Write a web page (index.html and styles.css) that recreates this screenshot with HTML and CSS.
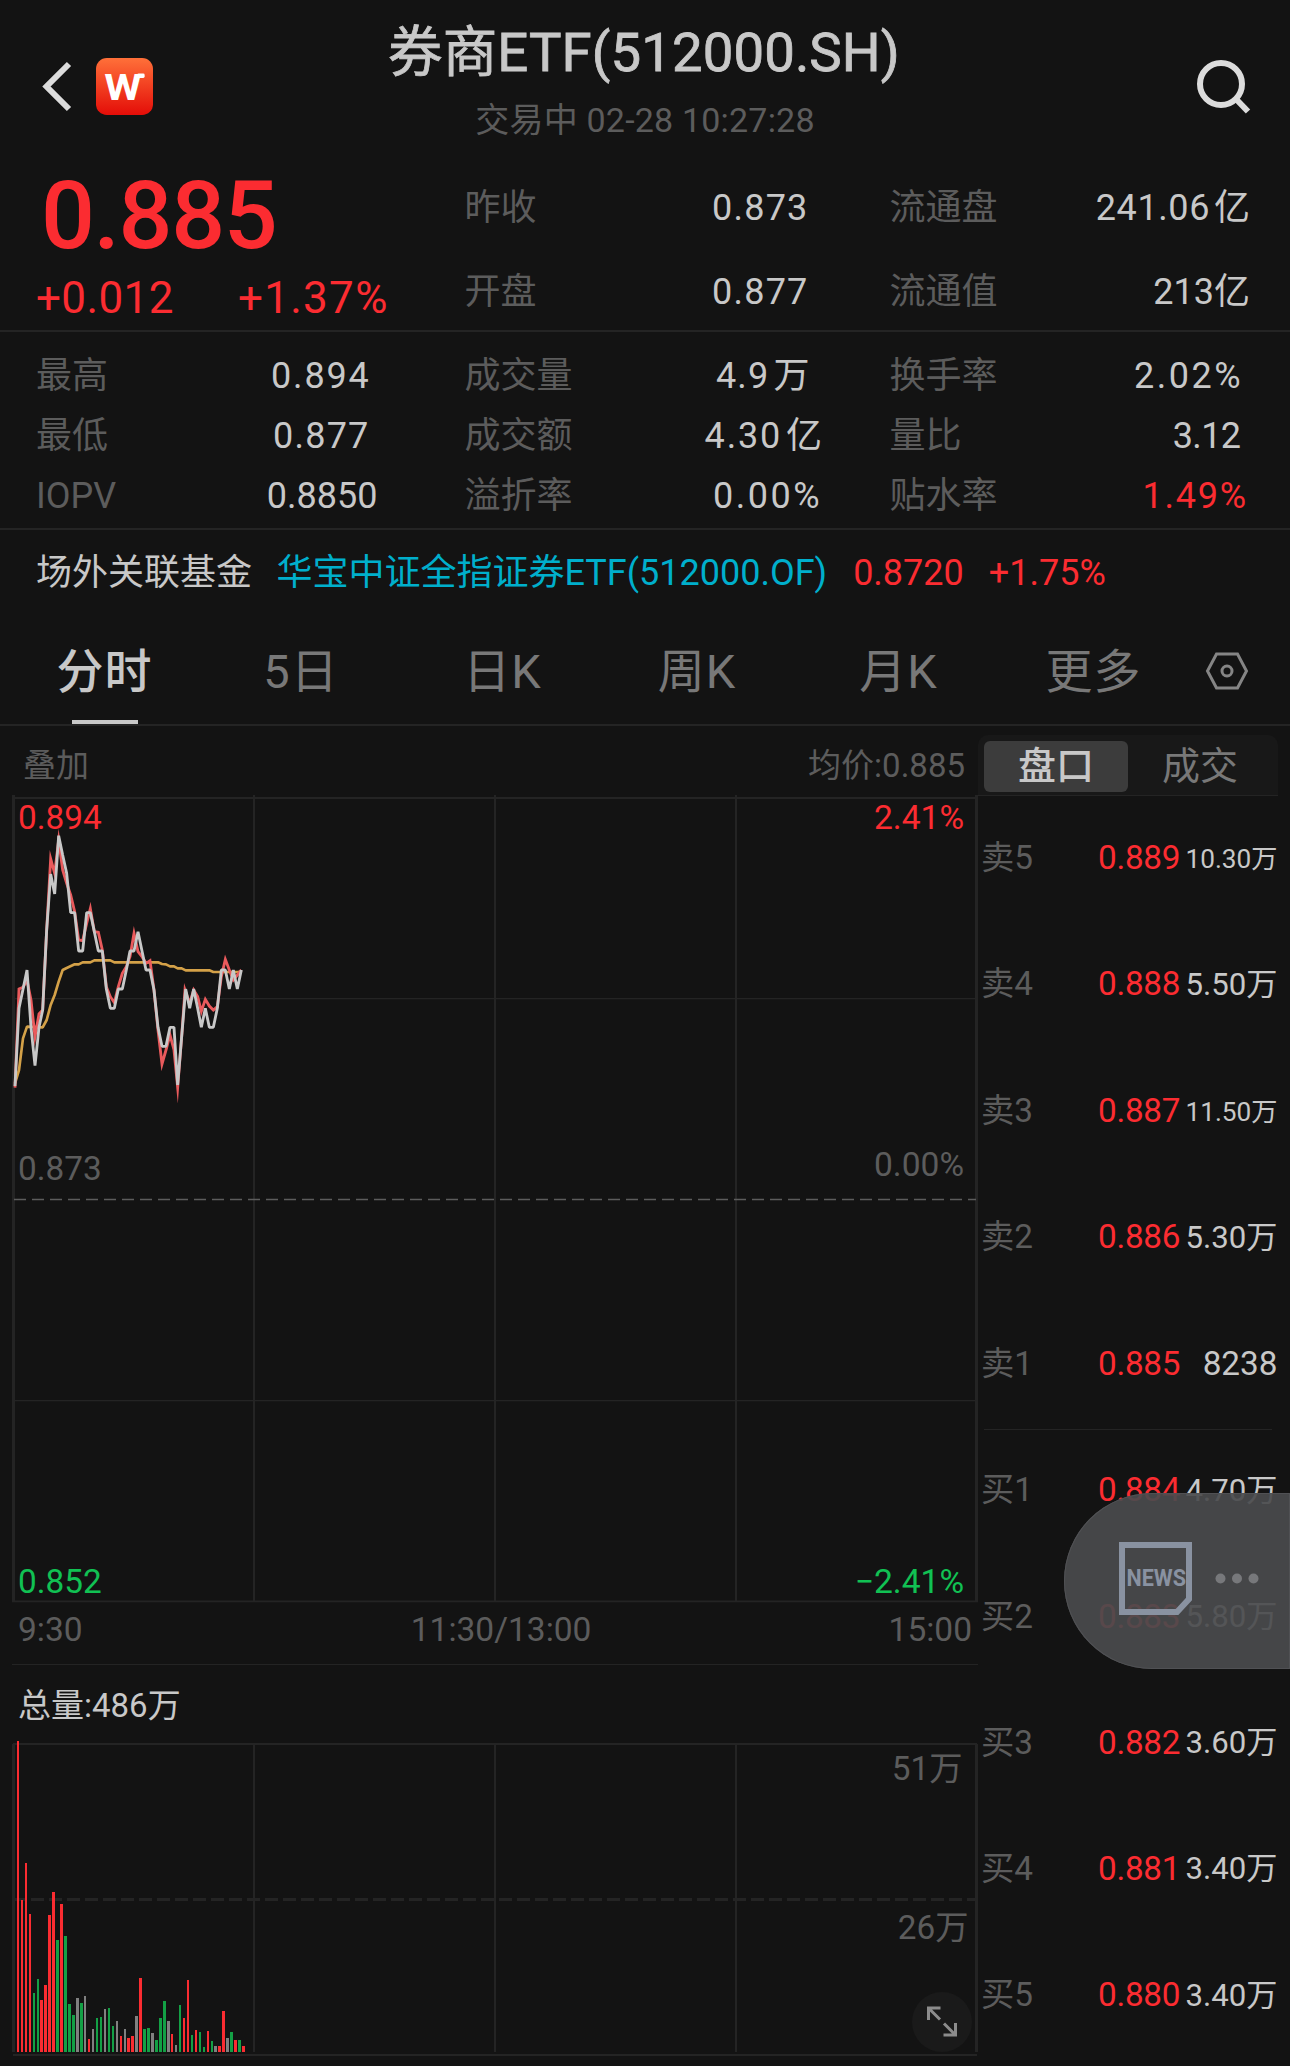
FILE: index.html
```html
<!DOCTYPE html>
<html lang="zh-CN">
<head>
<meta charset="utf-8">
<title>券商ETF(512000.SH)</title>
<link rel="stylesheet" href="styles.css">
</head>
<body>
<header class="header">
  <div class="header-left">
    <svg class="back" viewBox="40 60 32 54" width="32" height="54"><path d="M69 65L46.500 87.500L69 110" fill="none" stroke="#dcdcdc" stroke-width="6"/></svg>
    <svg class="logo" viewBox="0 0 58 58" width="57" height="57">
      <defs><linearGradient id="lg" x1="0" y1="0" x2="0" y2="1"><stop offset="0" stop-color="#ff7039"/><stop offset="1" stop-color="#e40d08"/></linearGradient></defs>
      <rect width="58" height="58" rx="11" fill="url(#lg)"/>
      <text x="8.500" y="43" textLength="38" lengthAdjust="spacingAndGlyphs" class="logo-letter">W</text>
      <rect x="42" y="15.800" width="7.500" height="4.500" rx="1.500" fill="#fff"/>
    </svg>
  </div>
  <div class="header-title">
    <h1>券商ETF(512000.SH)</h1>
    <p>交易中 02-28 10:27:28</p>
  </div>
  <svg class="search" viewBox="1194 57 60 60" width="60" height="60"><g fill="none" stroke="#dcdcdc" stroke-width="6"><circle cx="1221" cy="84" r="21"/><path d="M1235 98L1248 111.500"/></g></svg>
</header>

<section class="quote">
  <div class="quote-main up">
    <div class="price">0.885</div>
    <div class="change"><span>+0.012</span><span class="pct">+1.37%</span></div>
  </div>
  <div class="quote-stats">
    <div class="stat"><span>昨收</span><b class="e83 mid">0.873</b></div>
    <div class="stat"><span>流通盘</span><b class="e40 snug">241.06<i>亿</i></b></div>
    <div class="stat"><span>开盘</span><b class="e83 mid">0.877</b></div>
    <div class="stat"><span>流通值</span><b class="e40 tight">213亿</b></div>
  </div>
</section>

<section class="details">
  <div class="stat"><span>最高</span><b class="e94">0.894</b></div>
  <div class="stat"><span>成交量</span><b class="e79 mid">4.9<i>万</i></b></div>
  <div class="stat"><span>换手率</span><b class="e47 wide">2.02%</b></div>
  <div class="stat"><span>最低</span><b class="e97 mid">0.877</b></div>
  <div class="stat"><span>成交额</span><b class="e68">4.30<i>亿</i></b></div>
  <div class="stat"><span>量比</span><b class="e49 close">3.12</b></div>
  <div class="stat"><span>IOPV</span><b class="e88 tight">0.8850</b></div>
  <div class="stat"><span>溢折率</span><b class="e68 wide">0.00%</b></div>
  <div class="stat"><span>贴水率</span><b class="e42 up">1.49%</b></div>
</section>

<section class="fund">
  <span>场外关联基金</span><a>华宝中证全指证券ETF(512000.OF)</a><span class="up nav">0.8720</span><span class="up">+1.75%</span>
</section>

<nav class="tabs">
  <span class="tab active">分时</span><span class="tab">5日</span><span class="tab">日K</span><span class="tab">周K</span><span class="tab">月K</span><span class="tab">更多</span>
  <span class="tab"><svg viewBox="1204 650 46 42" width="46" height="42"><g fill="none" stroke="#858585" stroke-width="3"><path d="M1207.500 671L1216.500 654H1237.500L1246.500 671L1237.500 688H1216.500Z"/><circle cx="1227" cy="671" r="5"/></g></svg></span>
</nav>

<main class="board">
  <div class="charts">
    <div class="chart-bar"><span>叠加</span><span>均价:0.885</span></div>
    <svg class="chart" viewBox="12 795 966 808" width="966" height="808">
      <g fill="#242424">
        <path d="M12 795h3v807h-3zM253 795h2v807h-2zM494 795h2v807h-2zM735 795h2v807h-2zM975 795h3v807h-3z"/>
        <path d="M15 797h960v2h-960zM15 998h960v1.200h-960zM15 1400h960v1.200h-960zM12 1600.500h966v1.700h-966z"/>
      </g>
      <path d="M14 1199.500H976" stroke="#5c5c5c" stroke-width="1.300" stroke-dasharray="12 6"/>
      <g transform="translate(0 790) scale(.33333)" fill="none" stroke-linejoin="bevel" stroke-width="8.500">
        <polyline stroke="#d4a148" stroke-width="8" points="45,880 57,840 69,745 81,710 128,712 140,690 152,645 164,615 176,575 188,540 200,534 224,523 236,523 248,517 271,517 283,511 331,511 343,517 474,517 486,522 498,523 510,529 522,529 533,535 545,535 557,541 628,541 640,546 716,546 724,543"/>
        <polyline stroke="#e95a5c" stroke-linejoin="miter" stroke-miterlimit="14" points="45,893 57,597 69,592 81,570 93,630 105,740 117,672 128,660 140,420 152,206 164,250 176,150 188,240 200,280 212,315 224,365 236,450 248,452 260,400 271,356 283,425 295,427 307,480 319,590 331,620 343,638 355,590 367,550 379,530 390,500 402,430 414,485 426,500 438,520 450,512 462,600 474,720 486,822 498,780 510,735 522,780 533,892 545,740 555,600 569,640 581,600 593,620 604,664 616,628 628,648 640,660 652,650 664,560 676,508 688,540 700,570 712,555 724,540"/>
        <polyline stroke="#c8c8c8" points="45,888 57,655 69,598 81,540 93,712 105,827 117,712 128,660 140,420 152,252 164,312 176,137 188,195 200,250 212,368 224,368 236,483 248,483 260,368 271,368 283,425 295,483 307,483 319,597 331,655 343,655 355,597 367,597 379,540 390,483 402,483 414,425 426,483 438,540 450,540 462,600 474,712 486,769 498,769 510,712 522,712 533,885 545,740 557,597 569,655 581,597 593,655 604,712 616,655 628,712 640,712 652,655 664,540 676,540 688,597 700,540 712,597 724,540"/>
      </g>
      <g class="axis">
        <text class="t-up" x="18" y="829">0.894</text>
        <text x="18" y="1180">0.873</text>
        <text class="t-down" x="18" y="1593">0.852</text>
        <g text-anchor="end" class="axis-right">
          <text class="t-up" x="964" y="829">2.41%</text>
          <text x="964" y="1176">0.00%</text>
          <text class="t-down" x="964" y="1593">−2.41%</text>
        </g>
      </g>
    </svg>
    <div class="times"><span>9:30</span><span>11:30/13:00</span><span>15:00</span></div>
    <div class="vol-head">总量:486万</div>
    <svg class="chart" viewBox="12 1740 966 316" width="966" height="316">
      <g fill="#242424">
        <path d="M12 1744h3v308h-3zM253 1744h2v308h-2zM494 1744h2v308h-2zM735 1744h2v308h-2zM975 1744h3v308h-3z"/>
        <path d="M13 1743h964v2h-964zM13 2054h964v2h-964z"/>
      </g>
      <path d="M13 1899.500H976" stroke="#242424" stroke-width="3" stroke-dasharray="13 5"/>
      <path fill="#fb2c31" d="M17 2052v-311h2v311zM21 2052v-152h2v152zM25 2052v-189h2v189zM29 2052v-138h2v138zM40 2052v-52h3v52zM44 2052v-67h3v67zM48 2052v-137h3v137zM52 2052v-160h3v160zM60 2052v-148h3v148zM88 2052v-13h2v13zM120 2052v-16h2v16zM127 2052v-14h3v14zM131 2052v-16h3v16zM139 2052v-74h3v74zM171 2052v-18h2v18zM183 2052v-34h2v34zM187 2052v-72h2v72zM195 2052v-22h2v22zM207 2052v-21h2v21zM218 2052v-6h3v6zM222 2052v-41h3v41zM234 2052v-12h3v12zM242 2052v-6h3v6z"/>
      <path fill="#13a045" d="M33 2052v-59h2v59zM37 2052v-73h2v73zM56 2052v-112h3v112zM64 2052v-116h3v116zM68 2052v-48h3v48zM72 2052v-37h3v37zM80 2052v-49h3v49zM96 2052v-34h2v34zM100 2052v-35h2v35zM108 2052v-44h2v44zM112 2052v-26h2v26zM143 2052v-23h3v23zM147 2052v-24h3v24zM155 2052v-12h3v12zM159 2052v-34h3v34zM163 2052v-51h3v51zM179 2052v-47h2v47zM191 2052v-17h2v17zM199 2052v-20h2v20zM203 2052v-5h2v5zM211 2052v-11h2v11zM230 2052v-20h3v20zM238 2052v-12h3v12z"/>
      <path fill="#808080" d="M76 2052v-54h3v54zM84 2052v-56h2v56zM92 2052v-23h2v23zM104 2052v-43h2v43zM116 2052v-31h2v31zM124 2052v-23h2v23zM135 2052v-36h3v36zM151 2052v-19h3v19zM167 2052v-31h3v31zM175 2052v-7h2v7zM214 2052v-6h3v6zM226 2052v-14h3v14z"/>
      <g class="axis" text-anchor="end"><text x="962.500" y="1780">51万</text><text x="968.500" y="1939">26万</text></g>
      <circle cx="942" cy="2022" r="30" fill="#1a1a1a"/>
      <path d="M928.500 2020v-12h12M929 2008.500L940 2019.500M955.500 2023v12h-12M955 2034.500L944 2023.500" fill="none" stroke="#8c8c8c" stroke-width="3"/>
    </svg>
  </div>

  <aside class="book">
    <div class="switch"><span class="on">盘口</span><span>成交</span></div>
    <div class="side sells">
      <div class="row"><span>卖5</span><b>0.889</b><i class="small">10.30万</i></div>
      <div class="row"><span>卖4</span><b>0.888</b><i>5.50万</i></div>
      <div class="row"><span>卖3</span><b>0.887</b><i class="small">11.50万</i></div>
      <div class="row"><span>卖2</span><b>0.886</b><i>5.30万</i></div>
      <div class="row"><span>卖1</span><b>0.885</b><i class="plain">8238</i></div>
    </div>
    <div class="side buys">
      <div class="row"><span>买1</span><b>0.884</b><i>4.70万</i></div>
      <div class="row"><span>买2</span><b>0.883</b><i>5.80万</i></div>
      <div class="row"><span>买3</span><b>0.882</b><i>3.60万</i></div>
      <div class="row"><span>买4</span><b>0.881</b><i>3.40万</i></div>
      <div class="row"><span>买5</span><b>0.880</b><i>3.40万</i></div>
    </div>
  </aside>
</main>

<div class="news">
  <svg viewBox="1064 1493 226 176" width="226" height="176">
    <path d="M1122 1545H1189V1599L1177 1612H1122Z" fill="none" stroke="#8992a1" stroke-width="6"/>
    <text x="1126.500" y="1586" textLength="59.500" lengthAdjust="spacingAndGlyphs" class="news-text">NEWS</text>
    <g fill="#77787b"><circle cx="1220.500" cy="1578.500" r="5"/><circle cx="1237" cy="1578.500" r="5"/><circle cx="1253.500" cy="1578.500" r="5"/></g>
  </svg>
</div>
</body>
</html>
```

FILE: styles.css
```css
* { box-sizing: border-box; margin: 0; padding: 0; }
body {
  position: relative;
  width: 1290px;
  height: 2066px;
  overflow: hidden;
  background: #131313;
  color: #c8c8c8;
  font-family: Roboto, "Noto Sans CJK SC", sans-serif;
  font-size: 36px;
}
svg { display: block; }
b, i { font-weight: 400; font-style: normal; }
.up { color: #fb2c31; }

.header { display: grid; grid-template-columns: 200px 1fr 200px; height: 150px; }
.header-left { display: flex; align-items: center; height: 58px; margin-top: 57px; padding-left: 40px; gap: 24px; }
.logo-letter { font-size: 38px; font-weight: 700; fill: #fff; }
.header-title { text-align: center; padding-top: 20px; white-space: nowrap; }
.header-title h1 { font-size: 54.500px; font-weight: 400; line-height: 64px; margin-left: -2px; letter-spacing: .1px; -webkit-text-stroke: .8px #c8c8c8; }
.header-title p { font-size: 34px; line-height: 40px; margin-top: 16px; color: #5c5c5c; letter-spacing: .2px; }
.search { justify-self: end; margin: 57px 36px 0 0; }

.quote { display: grid; grid-template-columns: 464.500px 1fr; height: 182px; border-bottom: 2px solid #242424; }
.price { font-size: 95px; font-weight: 500; line-height: 90px; padding: 0 0 0 41px; margin-top: 21px; letter-spacing: -1.400px; }
.change { display: flex; font-size: 44px; line-height: 50px; margin-top: 12px; padding-left: 36px; letter-spacing: .4px; }
.change .pct { margin-left: 64px; letter-spacing: 1.3px; }
.quote-stats { display: grid; grid-template-columns: 425px 400.500px; grid-auto-rows: 60px; row-gap: 24px; padding-top: 28px; }
.stat { display: flex; justify-content: space-between; align-items: center; line-height: 60px; white-space: nowrap; }
.stat > span { color: #5c5c5c; }
.stat b { letter-spacing: 1.8px; }
.stat b i { letter-spacing: 0; margin-left: 4px; }
.stat .tight { letter-spacing: 0; }
.stat .close { letter-spacing: -.6px; }
.stat .snug { letter-spacing: .6px; }
.stat .mid { letter-spacing: 1.2px; }
.stat .wide { letter-spacing: 2.5px; }
.e40 { margin-right: 40px; } .e42 { margin-right: 42px; } .e47 { margin-right: 47px; }
.e49 { margin-right: 49.500px; } .e68 { margin-right: 67.500px; } .e79 { margin-right: 80px; }
.e83 { margin-right: 81px; } .e88 { margin-right: 87px; } .e94 { margin-right: 94px; } .e97 { margin-right: 95px; }

.details { display: grid; grid-template-columns: 428.500px 425px 400.500px; grid-auto-rows: 60px; height: 198px; padding: 13.500px 0 0 36px; border-bottom: 2px solid #242424; }

.fund { display: flex; align-items: center; height: 92px; line-height: 50px; padding: 0 0 6px 36px; white-space: nowrap; }
.fund a { color: #00afcc; margin-left: 24.500px; }
.fund .nav { margin: 0 25px 0 26px; }

.tabs { display: grid; grid-template-columns: 209px 184px 219px 170px 233px 157px 112px; height: 104px; border-bottom: 2px solid #242424; font-size: 47px; line-height: 60px; color: #787878; padding-right: 6px; }
.tab { display: flex; align-items: center; justify-content: center; white-space: nowrap; padding-bottom: 3px; letter-spacing: 1px; }
.tab svg { margin: -2px 0 0 -2px; }
.tab.active { position: relative; font-weight: 500; color: #c8c8c8; }
.tab.active::after { content: ""; position: absolute; left: 72px; bottom: 0; width: 66px; height: 4px; background: #c8c8c8; }

.board { display: grid; grid-template-columns: 966px 1fr; padding-left: 12px; }
.chart-bar { display: flex; justify-content: space-between; height: 69px; line-height: 59px; padding: 10px 13px 0 11px; font-size: 33px; color: #5c5c5c; }
.axis { font-size: 33.300px; fill: #5c5c5c; }
.axis-right { font-size: 33.600px; }
.t-up { fill: #fb2c31; }
.t-down { fill: #11c153; }
.times { display: flex; justify-content: space-between; height: 62px; line-height: 53px; padding: 0 6px; font-size: 33.500px; color: #5c5c5c; border-bottom: 1px solid #242424; }
.times span:nth-child(2) { padding-left: 31px; }
.vol-head { height: 75px; line-height: 71px; padding: 5px 0 0 6px; font-size: 33px; }

.book { padding-top: 9px; }
.switch { display: flex; width: 300px; height: 61px; padding: 6px 6px 3px; border-radius: 10px 10px 0 0; background: #181818; border-bottom: 1px solid #242424; font-size: 38px; line-height: 51px; color: #787878; text-align: center; }
.switch span { flex: 1; }
.switch .on { background: #3c3c3c; border-radius: 6px; color: #c8c8c8; font-weight: 500; }
.side { display: grid; grid-template-rows: repeat(5, 1fr); }
.sells { height: 633px; }
.buys { height: 631px; position: relative; }
.buys::before { content: ""; position: absolute; left: 6px; top: 0; width: 288px; height: 1px; background: #242424; }
.row { display: grid; grid-template-columns: 117px 84px 1fr; align-items: center; padding: 0 12.500px 3.500px 3px; font-size: 33.300px; line-height: 40px; color: #5c5c5c; white-space: nowrap; }
.row b { color: #fb2c31; letter-spacing: -.3px; }
.row i { color: #c8c8c8; text-align: right; font-size: 31.200px; padding-top: 1px; }
.row .small { font-size: 26.200px; padding-top: 3px; }
.row .plain { font-size: 33.300px; padding: 0; }

.news { position: absolute; left: 1064px; top: 1493px; width: 226px; height: 176px; border-radius: 88px 0 0 88px; background: rgba(74, 75, 77, .92); box-shadow: inset 0 0 0 1px #505154; }
.news-text { font-size: 23px; font-weight: 700; fill: #8992a1; }
```
